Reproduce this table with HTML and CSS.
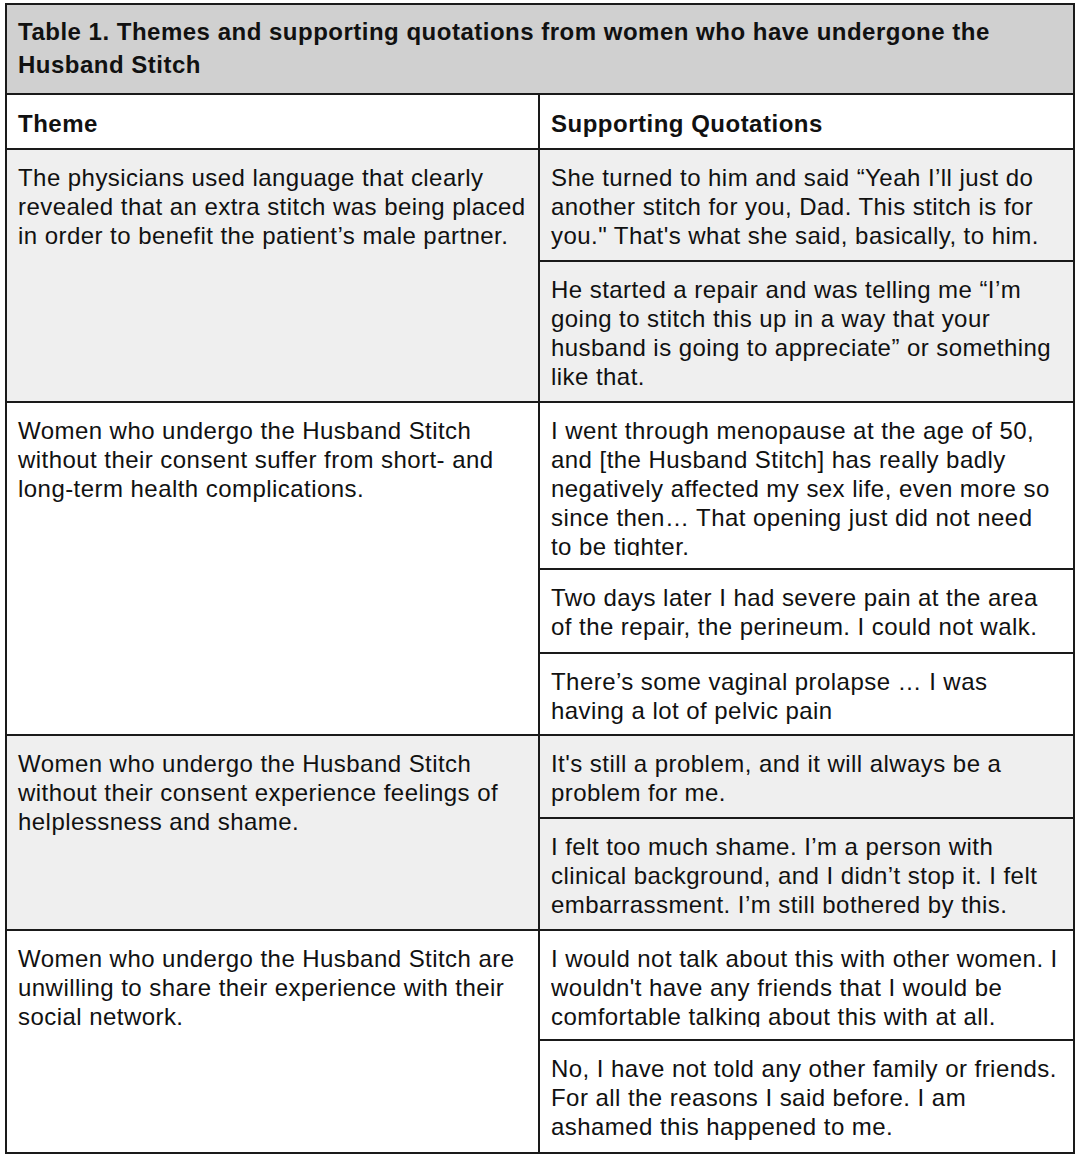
FILE: index.html
```html
<!DOCTYPE html>
<html lang="en">
<head>
<meta charset="utf-8">
<title>Table 1</title>
<link rel="stylesheet" href="styles.css">
</head>
<body>
<table class="themes">
  <colgroup>
    <col class="col-theme">
    <col class="col-quote">
  </colgroup>
  <thead>
    <tr>
      <th colspan="2" class="caption-cell">Table 1. Themes and supporting quotations from women who have undergone the<br>Husband Stitch</th>
    </tr>
    <tr class="head-row">
      <th>Theme</th>
      <th>Supporting Quotations</th>
    </tr>
  </thead>
  <tbody>
    <tr class="shade">
      <td rowspan="2">The physicians used language that clearly<br>revealed that an extra stitch was being placed<br>in order to benefit the patient’s male partner.</td>
      <td>She turned to him and said “Yeah I’ll just do<br>another stitch for you, Dad. This stitch is for<br>you." That's what she said, basically, to him.</td>
    </tr>
    <tr class="shade">
      <td>He started a repair and was telling me “I’m<br>going to stitch this up in a way that your<br>husband is going to appreciate” or something<br>like that.</td>
    </tr>
    <tr>
      <td rowspan="3">Women who undergo the Husband Stitch<br>without their consent suffer from short- and<br>long-term health complications.</td>
      <td class="clipped"><div class="clip clip-5">I went through menopause at the age of 50,<br>and [the Husband Stitch] has really badly<br>negatively affected my sex life, even more so<br>since then… That opening just did not need<br>to be tighter.</div></td>
    </tr>
    <tr>
      <td class="roomy">Two days later I had severe pain at the area<br>of the repair, the perineum. I could not walk.</td>
    </tr>
    <tr>
      <td class="short">There’s some vaginal prolapse … I was<br>having a lot of pelvic pain</td>
    </tr>
    <tr class="shade">
      <td rowspan="2">Women who undergo the Husband Stitch<br>without their consent experience feelings of<br>helplessness and shame.</td>
      <td>It's still a problem, and it will always be a<br>problem for me.</td>
    </tr>
    <tr class="shade">
      <td>I felt too much shame. I’m a person with<br>clinical background, and I didn’t stop it. I felt<br>embarrassment. I’m still bothered by this.</td>
    </tr>
    <tr>
      <td rowspan="2">Women who undergo the Husband Stitch are<br>unwilling to share their experience with their<br>social network.</td>
      <td class="clipped"><div class="clip clip-3">I would not talk about this with other women. I<br>wouldn't have any friends that I would be<br>comfortable talking about this with at all.</div></td>
    </tr>
    <tr>
      <td class="roomy">No, I have not told any other family or friends.<br>For all the reasons I said before. I am<br>ashamed this happened to me.</td>
    </tr>
  </tbody>
</table>
</body>
</html>
```

FILE: styles.css
```css
html, body {
  margin: 0;
  padding: 0;
  background: #ffffff;
}

body {
  padding: 3px 0 0 5px;
  font-family: "Liberation Sans", Arial, sans-serif;
  color: #111111;
}

.themes {
  border-collapse: collapse;
  width: 1068px;
  table-layout: fixed;
  border: 2px solid #1a1a1a;
}

.col-theme { width: 533px; }
.col-quote { width: 535px; }

.themes th,
.themes td {
  border: 2px solid #1a1a1a;
  text-align: left;
  vertical-align: top;
  font-size: 24px;
  line-height: 29px;
  letter-spacing: 0.45px;
  padding: 13px 6px 10px 11px;
  white-space: nowrap;
  overflow: hidden;
}

.themes th {
  font-weight: bold;
  letter-spacing: 0.5px;
}

.themes .caption-cell {
  background: #d0d0d0;
  line-height: 33px;
  padding: 10px 6px 12px 11px;
}

.head-row th {
  background: #ffffff;
  padding: 14px 6px 10px 11px;
}

.shade td {
  background: #efefef;
}

.themes td.clipped {
  padding-bottom: 12px;
}

.clip {
  overflow: hidden;
}

.clip-5 { height: 140px; }
.clip-3 { height: 83px; }

.themes td.roomy {
  padding-bottom: 11px;
}

.themes td.short {
  padding-bottom: 9px;
}
```
